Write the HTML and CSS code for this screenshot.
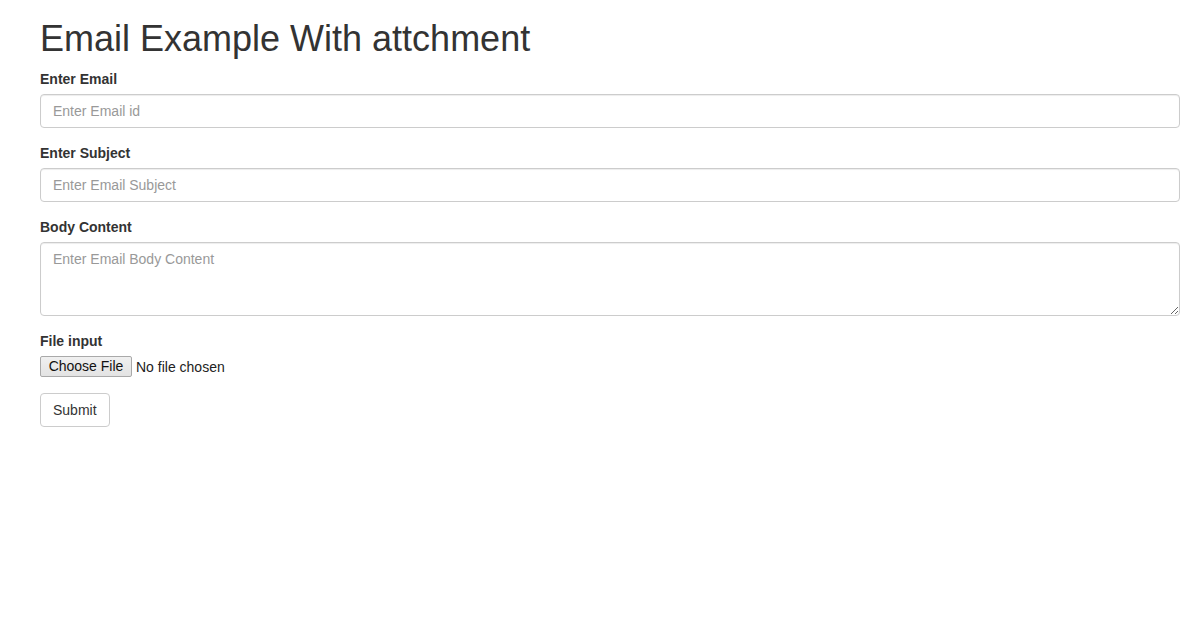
FILE: index.html
```html
<!DOCTYPE html>
<html lang="en">
<head>
    <meta charset="UTF-8">
    <meta name="viewport" content="width=device-width, initial-scale=1.0">
    <title>Email Example With attchment</title>
    <link rel="stylesheet" href="styles.css">
</head>
<body>
    <div class="container">
        <h1>Email Example With attchment</h1>
        <form>
            <div class="form-group">
                <label for="email">Enter Email</label>
                <input type="email" class="form-control" id="email" placeholder="Enter Email id">
            </div>
            <div class="form-group">
                <label for="subject">Enter Subject</label>
                <input type="text" class="form-control" id="subject" placeholder="Enter Email Subject">
            </div>
            <div class="form-group">
                <label for="body">Body Content</label>
                <textarea class="form-control" id="body" rows="3" placeholder="Enter Email Body Content"></textarea>
            </div>
            <div class="form-group">
                <label for="file">File input</label>
                <div class="file-input">
                    <label class="file-btn" for="file">Choose File</label>
                    <span class="file-name">No file chosen</span>
                    <input type="file" id="file" class="file-hidden">
                </div>
            </div>
            <button type="submit" class="btn">Submit</button>
        </form>
    </div>
</body>
</html>
```

FILE: styles.css
```css
* {
    box-sizing: border-box;
}
body {
    margin: 0;
    font-family: "Liberation Sans", Arial, sans-serif;
    font-size: 14px;
    line-height: 1.42857143;
    color: #333;
    background: #fff;
}
.container {
    padding: 0 13px 0 40px;
}
h1 {
    font-size: 36px;
    font-weight: 500;
    line-height: 1.1;
    margin: 19px 0 10px;
}
.form-group {
    margin-bottom: 15px;
}
label {
    display: inline-block;
    max-width: 100%;
    margin-bottom: 5px;
    font-weight: bold;
}
.form-control {
    display: block;
    width: 100%;
    height: 34px;
    padding: 6px 12px;
    font-family: inherit;
    font-size: 14px;
    line-height: 1.42857143;
    color: #555;
    background: #fff;
    border: 1px solid #ccc;
    border-radius: 4px;
    box-shadow: inset 0 1px 1px rgba(0, 0, 0, 0.075);
    margin: 0;
}
.form-control::placeholder {
    color: #999;
}
textarea.form-control {
    height: 74px;
    resize: vertical;
}
.file-input {
    display: flex;
    align-items: center;
    height: 22px;
}
.file-btn {
    margin: 0;
    font-weight: normal;
    height: 21px;
    line-height: 19px;
    padding: 0 7px 0 7px;
    width: 92px;
    text-align: center;
    color: #111;
    background: linear-gradient(#f0f0f0, #e3e3e3);
    border: 1px solid #a9a9a9;
    border-radius: 2px;
    cursor: default;
}
.file-name {
    margin-left: 4px;
    color: #222;
}
.file-hidden {
    display: none;
}
.btn {
    display: inline-block;
    height: 34px;
    padding: 6px 12px;
    font-family: inherit;
    font-size: 14px;
    line-height: 1.42857143;
    color: #333;
    background: #fff;
    border: 1px solid #ccc;
    border-radius: 4px;
    cursor: pointer;
}
```
